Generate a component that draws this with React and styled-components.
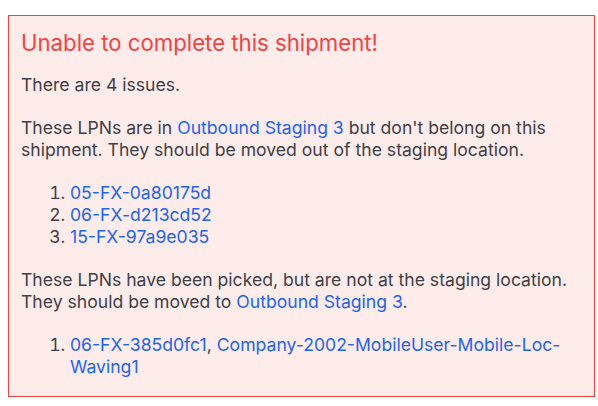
import React from "react";
import styled, { createGlobalStyle } from "styled-components";

const Global = createGlobalStyle`
  html, body { margin: 0; padding: 0; background: #ffffff; }
  body { font-family: Inter, "Noto Sans", sans-serif; }
`;

const Page = styled.div`
  padding: 15px 3px 0 8px;
`;

const Alert = styled.section`
  border: 1px solid #ef4444;
  background: #feeceb;
  padding: 14px 12px 18px;
  color: #3f3f46;
  font-size: 17.6px;
  line-height: 22.4px;
`;

const Title = styled.h2`
  margin: 0 0 18px;
  font-size: 22.2px;
  line-height: 26.4px;
  font-weight: 400;
  color: #ef4444;
`;

const Para = styled.p`
  margin: 0 0 20px;
`;

const List = styled.ol`
  margin: 0 0 ${(p) => (p.$last ? "0" : "20px")};
  padding-left: 49px;
`;

const Link = styled.a`
  color: #1d64f0;
  text-decoration: none;
`;

const misplaced = ["05-FX-0a80175d", "06-FX-d213cd52", "15-FX-97a9e035"];

export default function App() {
  return (
    <>
      <Global />
      <Page>
        <Alert>
          <Title>Unable to complete this shipment!</Title>
          <Para>There are 4 issues.</Para>
          <Para>
            These LPNs are in <Link href="#">Outbound Staging 3</Link> but don't
            belong on this shipment. They should be moved out of the staging
            location.
          </Para>
          <List>
            {misplaced.map((l) => (
              <li key={l}>
                <Link href="#">{l}</Link>
              </li>
            ))}
          </List>
          <Para>
            These LPNs have been picked, but are not at the staging location.
            They should be moved to <Link href="#">Outbound Staging 3</Link>.
          </Para>
          <List $last>
            <li>
              <Link href="#">06-FX-385d0fc1</Link>,{" "}
              <Link href="#">Company-2002-MobileUser-Mobile-Loc-Waving1</Link>
            </li>
          </List>
        </Alert>
      </Page>
    </>
  );
}
